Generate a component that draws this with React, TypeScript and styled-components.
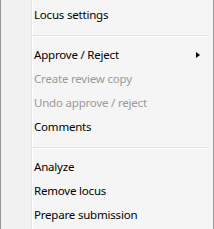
import React from "react";
import styled, { createGlobalStyle } from "styled-components";

const GlobalStyle = createGlobalStyle`
  html, body {
    margin: 0;
    padding: 0;
    background: #ffffff;
  }
`;

const Menu = styled.ul`
  list-style: none;
  margin: 0;
  padding: 3px 0 2px 0;
  width: 214px;
  box-sizing: border-box;
  border-left: 1px solid #979797;
  border-right: 1px solid #979797;
  font-family: "Noto Sans", "Open Sans", sans-serif;
  font-size: 11.5px;
  letter-spacing: -0.2px;
  background: linear-gradient(
    to right,
    #f1f1f1 0,
    #f1f1f1 30px,
    #e2e3e3 30px,
    #e2e3e3 31px,
    #ffffff 31px,
    #ffffff 32px,
    #f5f5f5 32px
  );
`;

const Item = styled.li<{ $disabled?: boolean }>`
  display: flex;
  align-items: center;
  justify-content: space-between;
  height: 24px;
  line-height: 24px;
  padding: 0 13px 0 33px;
  color: ${(p) => (p.$disabled ? "#9a9a9a" : "#000000")};
  white-space: nowrap;
  cursor: default;
`;

const Arrow = styled.span`
  width: 0;
  height: 0;
  border-top: 3.5px solid transparent;
  border-bottom: 3.5px solid transparent;
  border-left: 4px solid #000000;
`;

const Separator = styled.li`
  height: 16px;
  box-sizing: border-box;
  padding: 8px 4px 0 32px;

  &::before {
    content: "";
    display: block;
    height: 1px;
    background: #e0e0e0;
    border-bottom: 1px solid #ffffff;
  }
`;

type Entry =
  | { kind: "item"; label: string; disabled?: boolean; submenu?: boolean }
  | { kind: "sep" };

const entries: Entry[] = [
  { kind: "item", label: "Locus settings" },
  { kind: "sep" },
  { kind: "item", label: "Approve / Reject", submenu: true },
  { kind: "item", label: "Create review copy", disabled: true },
  { kind: "item", label: "Undo approve / reject", disabled: true },
  { kind: "item", label: "Comments" },
  { kind: "sep" },
  { kind: "item", label: "Analyze" },
  { kind: "item", label: "Remove locus" },
  { kind: "item", label: "Prepare submission" },
];

const App: React.FC = () => {
  return (
    <>
      <GlobalStyle />
      <Menu>
        {entries.map((e, i) =>
          e.kind === "sep" ? (
            <Separator key={i} />
          ) : (
            <Item key={i} $disabled={e.disabled}>
              <span>{e.label}</span>
              {e.submenu && <Arrow />}
            </Item>
          )
        )}
      </Menu>
    </>
  );
};

export default App;
